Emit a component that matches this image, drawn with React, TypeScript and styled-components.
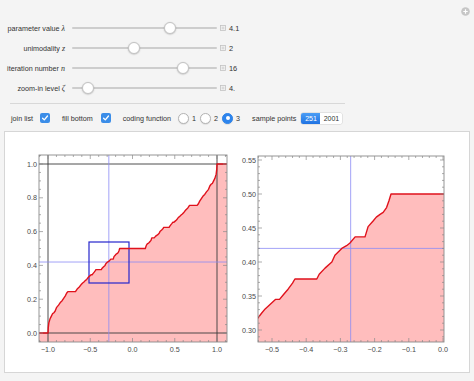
import React from "react";
import styled, { createGlobalStyle } from "styled-components";

const GlobalStyle = createGlobalStyle`
  html, body { margin: 0; padding: 0; background: #f4f4f4; }
  body { font-family: "Liberation Sans", Arial, sans-serif; }
`;

const Page = styled.div`
  box-sizing: border-box;
  width: 474px;
  height: 381px;
  padding: 7px 4px 0 4px;
  display: flex;
  flex-direction: column;
  background: #f4f4f4;
  color: #333;
  font-size: 7.2px;
  overflow: hidden;
`;

const Header = styled.div`
  height: 10px;
  display: flex;
  justify-content: flex-end;
  align-items: flex-start;
`;

const Sliders = styled.div`
  margin-top: 1px;
  display: flex;
  flex-direction: column;
`;

const SliderRow = styled.div`
  height: 20px;
  display: flex;
  align-items: center;
`;

const SliderLabel = styled.div`
  width: 61px;
  text-align: right;
  white-space: nowrap;
`;

const Sym = styled.i`
  font-family: "Liberation Serif", "DejaVu Serif", serif;
  font-size: 8px;
`;

const Track = styled.div`
  position: relative;
  margin-left: 7px;
  width: 145px;
  height: 2px;
  border-radius: 1px;
  background: #cdcdcd;
`;

const Knob = styled.div`
  position: absolute;
  top: -5px;
  width: 12px;
  height: 12px;
  border-radius: 50%;
  background: #fff;
  border: 0.5px solid #c4c4c4;
  box-sizing: border-box;
  box-shadow: 0 0.5px 1.5px rgba(0, 0, 0, 0.25);
`;

const PlusSlot = styled.div`
  margin-left: 3px;
  display: flex;
  align-items: center;
`;

const Value = styled.div`
  margin-left: 3px;
  font-size: 7.4px;
`;

const Divider = styled.div`
  margin: 5px 0 0 6px;
  width: 335px;
  height: 1px;
  background: #d8d8d8;
`;

const Options = styled.div`
  margin-top: 7px;
  height: 14px;
  padding-left: 7px;
  display: flex;
  align-items: center;
  gap: 12px;
`;

const Group = styled.div<{ $gap: number }>`
  display: flex;
  align-items: center;
  gap: ${(p) => p.$gap}px;
`;

const CheckBox = styled.div`
  width: 10px;
  height: 10px;
  border-radius: 2px;
  background: #3b8de8;
  display: flex;
  align-items: center;
  justify-content: center;
`;

const RadioItem = styled.label`
  display: flex;
  align-items: center;
  gap: 3px;
`;

const Radio = styled.div<{ $on?: boolean }>`
  width: 11px;
  height: 11px;
  box-sizing: border-box;
  border-radius: 50%;
  background: ${(p) => (p.$on ? "#2d84ec" : "#fff")};
  border: 0.5px solid ${(p) => (p.$on ? "#2d84ec" : "#b4b4b4")};
  box-shadow: 0 0.5px 1px rgba(0, 0, 0, 0.15);
  display: flex;
  align-items: center;
  justify-content: center;
  &::after {
    content: "";
    display: ${(p) => (p.$on ? "block" : "none")};
    width: 4px;
    height: 4px;
    border-radius: 50%;
    background: #fff;
  }
`;

const Segmented = styled.div`
  display: flex;
  height: 11px;
  border-radius: 2px;
  overflow: hidden;
  box-shadow: 0 0 0 0.5px #d0d0d0;
  background: #fff;
`;

const Segment = styled.div<{ $active?: boolean; $w: number }>`
  width: ${(p) => p.$w}px;
  display: flex;
  align-items: center;
  justify-content: center;
  font-size: 7px;
  color: ${(p) => (p.$active ? "#fff" : "#333")};
  background: ${(p) => (p.$active ? "linear-gradient(#4b9df5, #1f72e2)" : "#fff")};
`;

const Panel = styled.div`
  margin-top: 6px;
  height: 242px;
  box-sizing: border-box;
  border: 1px solid #d6d6d6;
  background: #fff;
  display: flex;
`;

const PlotSvg = styled.svg`
  display: block;
  width: 232px;
  height: 240px;
  font-family: "Liberation Sans", Arial, sans-serif;
`;

type Pt = [number, number];

const half: Pt[] = [
  [-1.2, 0], [-1, 0], [-0.997, 0.03], [-0.99, 0.06], [-0.975, 0.085], [-0.96, 0.1],
  [-0.945, 0.115], [-0.93, 0.12], [-0.915, 0.13], [-0.9, 0.15], [-0.875, 0.165],
  [-0.855, 0.18], [-0.835, 0.19], [-0.815, 0.205], [-0.795, 0.22], [-0.78, 0.235],
  [-0.765, 0.245], [-0.675, 0.245], [-0.655, 0.26], [-0.63, 0.272], [-0.61, 0.285],
  [-0.59, 0.296], [-0.575, 0.302], [-0.56, 0.31], [-0.542, 0.317], [-0.53, 0.325],
  [-0.52, 0.331], [-0.505, 0.338], [-0.49, 0.345], [-0.478, 0.345], [-0.465, 0.353],
  [-0.453, 0.36], [-0.44, 0.369], [-0.433, 0.375], [-0.369, 0.375], [-0.362, 0.382],
  [-0.345, 0.391], [-0.325, 0.4], [-0.316, 0.41], [-0.296, 0.42], [-0.282, 0.424],
  [-0.272, 0.428], [-0.257, 0.437], [-0.228, 0.437], [-0.219, 0.452], [-0.205, 0.46],
  [-0.195, 0.466], [-0.184, 0.47], [-0.175, 0.473], [-0.165, 0.48], [-0.158, 0.49],
  [-0.152, 0.5],
];
const curve: Pt[] = [...half, ...half.slice().reverse().map(([x, y]) => [-x, 1 - y] as Pt)];

const steps = (from: number, to: number, div: number) => {
  const out: number[] = [];
  for (let i = from; i <= to; i++) out.push(i / div);
  return out;
};

const fmt = (d: number) => (v: number) => (v < -1e-9 ? "\u2212" : "") + Math.abs(v).toFixed(d);

type PlotSpec = {
  id: string;
  view: string;
  frame: { l: number; t: number; r: number; b: number };
  X: (x: number) => number;
  Y: (y: number) => number;
  xMinor: number[];
  xMajor: number[];
  xFmt: (v: number) => string;
  yMinor: number[];
  yMajor: number[];
  yFmt: (v: number) => string;
  cross: Pt;
  box?: { l: number; t: number; r: number; b: number };
  bounds?: boolean;
};

const isIn = (v: number, list: number[]) => list.some((m) => Math.abs(m - v) < 1e-6);

const Plot = ({ s }: { s: PlotSpec }) => {
  const { frame: f, X, Y } = s;
  const line = curve.map(([x, y]) => `${X(x).toFixed(2)},${Y(y).toFixed(2)}`).join(" L");
  const fill = `M${X(curve[0][0])},${f.b} L${line} L${X(curve[curve.length - 1][0])},${f.b} Z`;
  const tc = "#8a8a8a";
  return (
    <PlotSvg viewBox={s.view}>
      <defs>
        <clipPath id={s.id}>
          <rect x={f.l} y={f.t} width={f.r - f.l} height={f.b - f.t} />
        </clipPath>
      </defs>
      <g clipPath={`url(#${s.id})`}>
        <path d={fill} fill="#ffbdbd" />
        {s.bounds && (
          <g stroke="#3a3a3a" strokeWidth={0.9}>
            <line x1={f.l} x2={f.r} y1={Y(1)} y2={Y(1)} />
            <line x1={f.l} x2={f.r} y1={Y(0)} y2={Y(0)} />
            <line x1={X(-1)} x2={X(-1)} y1={f.t} y2={f.b} />
            <line x1={X(1)} x2={X(1)} y1={f.t} y2={f.b} />
          </g>
        )}
        <g stroke="#8c8cf5" strokeWidth={0.8}>
          <line x1={X(s.cross[0])} x2={X(s.cross[0])} y1={f.t} y2={f.b} />
          <line x1={f.l} x2={f.r} y1={Y(s.cross[1])} y2={Y(s.cross[1])} />
        </g>
        {s.box && (
          <rect x={s.box.l} y={s.box.t} width={s.box.r - s.box.l} height={s.box.b - s.box.t}
            fill="none" stroke="#2626cc" strokeWidth={1.2} />
        )}
        <path d={`M${line}`} fill="none" stroke="#e0121c" strokeWidth={1.4} strokeLinejoin="round" />
      </g>
      <rect x={f.l} y={f.t} width={f.r - f.l} height={f.b - f.t} fill="none" stroke={tc} strokeWidth={0.9} />
      <g stroke={tc} strokeWidth={0.7}>
        {s.xMinor.map((v) => {
          const x = X(v);
          const len = isIn(v, s.xMajor) ? 4 : 2;
          return (
            <g key={`x${v}`}>
              <line x1={x} x2={x} y1={f.b} y2={f.b - len} />
              <line x1={x} x2={x} y1={f.t} y2={f.t + len} />
            </g>
          );
        })}
        {s.yMinor.map((v) => {
          const y = Y(v);
          const len = isIn(v, s.yMajor) ? 4 : 2;
          return (
            <g key={`y${v}`}>
              <line x1={f.l} x2={f.l + len} y1={y} y2={y} />
              <line x1={f.r} x2={f.r - len} y1={y} y2={y} />
            </g>
          );
        })}
      </g>
      <g fill="#4a4a4a" fontSize={7.2}>
        {s.xMajor.map((v) => (
          <text key={`xl${v}`} x={X(v)} y={f.b + 10} textAnchor="middle">{s.xFmt(v)}</text>
        ))}
        {s.yMajor.map((v) => (
          <text key={`yl${v}`} x={f.l - 2} y={Y(v) + 2.6} textAnchor="end">{s.yFmt(v)}</text>
        ))}
      </g>
    </PlotSvg>
  );
};

const leftSpec: PlotSpec = {
  id: "clipL",
  view: "5 132 232 240",
  frame: { l: 39, t: 155, r: 227, b: 342 },
  X: (x) => 132.5 + 84.5 * x,
  Y: (y) => 333 - 169 * y,
  xMinor: steps(-11, 11, 10),
  xMajor: [-1, -0.5, 0, 0.5, 1],
  xFmt: fmt(1),
  yMinor: steps(-1, 21, 20),
  yMajor: [0, 0.2, 0.4, 0.6, 0.8, 1],
  yFmt: fmt(1),
  cross: [-0.28, 0.42],
  box: { l: 89, t: 242, r: 129, b: 283 },
  bounds: true,
};

const rightSpec: PlotSpec = {
  id: "clipR",
  view: "237 132 232 240",
  frame: { l: 258, t: 156, r: 444, b: 342 },
  X: (x) => 443 + 342 * x,
  Y: (y) => 262 - 680 * (y - 0.4),
  xMinor: steps(-27, 0, 50),
  xMajor: [-0.5, -0.4, -0.3, -0.2, -0.1, 0],
  xFmt: fmt(1),
  yMinor: steps(29, 55, 100),
  yMajor: [0.3, 0.35, 0.4, 0.45, 0.5, 0.55],
  yFmt: fmt(2),
  cross: [-0.27, 0.42],
};

const sliders = [
  { label: "parameter value ", sym: "λ", frac: 0.676, value: "4.1" },
  { label: "unimodality ", sym: "z", frac: 0.428, value: "2" },
  { label: "iteration number ", sym: "n", frac: 0.766, value: "16" },
  { label: "zoom-in level ", sym: "ζ", frac: 0.11, value: "4." },
];

const Check = () => (
  <svg width="8" height="8" viewBox="0 0 8 8">
    <path d="M1.6 4.2 L3.3 5.9 L6.5 2" fill="none" stroke="#fff" strokeWidth="1.3"
      strokeLinecap="round" strokeLinejoin="round" />
  </svg>
);

const AddIcon = () => (
  <svg width="9" height="9" viewBox="0 0 9 9">
    <circle cx="4.5" cy="4.5" r="4.3" fill="#c6c6c6" />
    <path d="M4.5 2.3 V6.7 M2.3 4.5 H6.7" stroke="#fff" strokeWidth="1.2" />
  </svg>
);

const SmallPlus = () => (
  <svg width="6" height="6" viewBox="0 0 6 6">
    <rect x="0.5" y="0.5" width="5" height="5" fill="#f0f0f0" stroke="#c2c2c2" strokeWidth="0.8" />
    <path d="M3 1.6 V4.4 M1.6 3 H4.4" stroke="#c8c8c8" strokeWidth="0.7" />
  </svg>
);

export default function App() {
  return (
    <Page>
      <GlobalStyle />
      <Header>
        <AddIcon />
      </Header>
      <Sliders>
        {sliders.map((s) => (
          <SliderRow key={s.label}>
            <SliderLabel>
              {s.label}
              <Sym>{s.sym}</Sym>
            </SliderLabel>
            <Track>
              <Knob style={{ left: s.frac * 145 - 6 }} />
            </Track>
            <PlusSlot>
              <SmallPlus />
            </PlusSlot>
            <Value>{s.value}</Value>
          </SliderRow>
        ))}
      </Sliders>
      <Divider />
      <Options>
        <Group $gap={7}>
          <span>join list</span>
          <CheckBox><Check /></CheckBox>
        </Group>
        <Group $gap={8}>
          <span>fill bottom</span>
          <CheckBox><Check /></CheckBox>
        </Group>
        <Group $gap={4}>
          <span style={{ marginRight: 3 }}>coding function</span>
          <RadioItem><Radio />1</RadioItem>
          <RadioItem><Radio />2</RadioItem>
          <RadioItem><Radio $on />3</RadioItem>
        </Group>
        <Group $gap={5}>
          <span>sample points</span>
          <Segmented>
            <Segment $active $w={19}>251</Segment>
            <Segment $w={22}>2001</Segment>
          </Segmented>
        </Group>
      </Options>
      <Panel>
        <Plot s={leftSpec} />
        <Plot s={rightSpec} />
      </Panel>
    </Page>
  );
}
